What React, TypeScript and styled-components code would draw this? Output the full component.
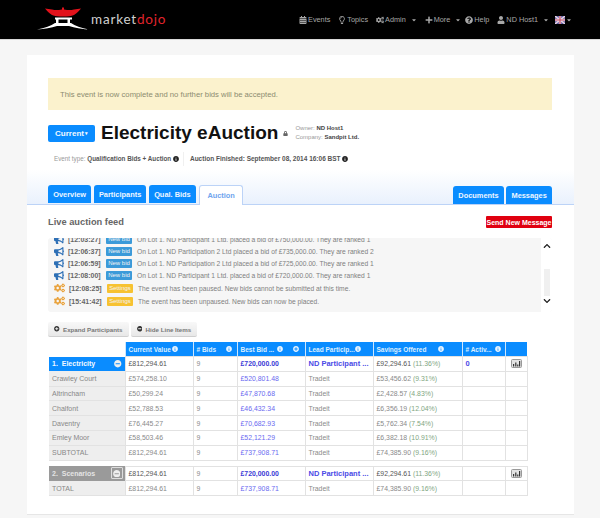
import React from "react";
import styled, { createGlobalStyle } from "styled-components";
import {
  FaBullhorn,
  FaCalendarAlt,
  FaChevronDown,
  FaChevronUp,
  FaCogs,
  FaInfoCircle,
  FaLock,
  FaMinusCircle,
  FaPlus,
  FaPlusCircle,
  FaQuestionCircle,
  FaRegLightbulb,
  FaUser,
  FaCaretDown,
} from "react-icons/fa";

const GlobalStyle = createGlobalStyle`
  html, body {
    margin: 0;
    height: 518px;
    overflow: hidden;
    background: #f6f6f6;
    font-family: "Liberation Sans", Arial, sans-serif;
  }
`;

const feed = [
  { kind: "bid", time: "[12:03:27]", text: "On Lot 1. ND Participant 1 Ltd. placed a bid of £750,000.00. They are ranked 1" },
  { kind: "bid", time: "[12:06:37]", text: "On Lot 1. ND Participation 2 Ltd placed a bid of £735,000.00. They are ranked 2" },
  { kind: "bid", time: "[12:06:59]", text: "On Lot 1. ND Participation 2 Ltd placed a bid of £725,000.00. They are ranked 1" },
  { kind: "bid", time: "[12:08:00]", text: "On Lot 1. ND Participant 1 Ltd. placed a bid of £720,000.00. They are ranked 1" },
  { kind: "settings", time: "[12:08:25]", text: "The event has been paused. New bids cannot be submitted at this time." },
  { kind: "settings", time: "[15:41:42]", text: "The event has been unpaused. New bids can now be placed." },
];

const lots = [
  ["Crawley Court", "£574,258.10", "£520,801.48", "£53,456.62", "(9.31%)"],
  ["Altrincham", "£50,299.24", "£47,870.68", "£2,428.57", "(4.83%)"],
  ["Chalfont", "£52,788.53", "£46,432.34", "£6,356.19", "(12.04%)"],
  ["Daventry", "£76,445.27", "£70,682.93", "£5,762.34", "(7.54%)"],
  ["Emley Moor", "£58,503.46", "£52,121.29", "£6,382.18", "(10.91%)"],
  ["SUBTOTAL", "£812,294.61", "£737,908.71", "£74,385.90", "(9.16%)"],
];

const columns = [76, 68, 44, 68, 68, 89, 43, 22];

const Logo = () => (
  <LogoWrap>
    <svg width="52" height="24" viewBox="0 0 52 24">
      <path d="M0 22.5 C8 21 14 19 18 16 L34 16 C38 19 44 21 52 22.5 C44 22 38 21 32 19 L20 19 C14 21 8 22 0 22.5Z" fill="#fff" />
      <path d="M18 10.5 H35 V12.5 H33 V17 H30.5 V12.5 H21.5 V17 H19 V12.5 H18Z" fill="#fff" />
      <path d="M25 0.5 H27 V2.5 C31 3 33 3.5 37 2.5 L44 1.5 C42 4 40 6 37 8 C32 10 20 10 15 8 C12 6 10 4 8 1.5 L15 2.5 C19 3.5 21 3 25 2.5Z" fill="#e2121b" />
    </svg>
    <Brand>
      market<BrandRed>dojo</BrandRed>
    </Brand>
  </LogoWrap>
);

const Flag = () => (
  <svg width="10" height="8" viewBox="0 0 10 8">
    <rect width="10" height="8" fill="#5b5ba8" />
    <path d="M0 0 L10 8 M10 0 L0 8" stroke="#e9d5e0" strokeWidth="1.4" />
    <path d="M5 0 V8 M0 4 H10" stroke="#e9d5e0" strokeWidth="2.4" />
    <path d="M5 0 V8 M0 4 H10" stroke="#c9566e" strokeWidth="1.2" />
  </svg>
);

const ChartIcon = () => (
  <svg width="11" height="9" viewBox="0 0 11 9">
    <rect x="0.5" y="0.5" width="10" height="8" rx="1" fill="#e4e4e4" stroke="#999" />
    <path d="M2 7.5 H3.2 V5 H2Z M4.2 7.5 H5.4 V3.5 H4.2Z M6.2 7.5 H7.4 V5.5 H6.2Z M8 7.5 H9.2 V2 H8Z" fill="#333" />
  </svg>
);

const App: React.FC = () => {
  return (
    <>
      <GlobalStyle />
      <Header>
        <Logo />
        <Nav>
          <NavItem $gap={8}><FaCalendarAlt />Events</NavItem>
          <NavItem $gap={8}><FaRegLightbulb />Topics</NavItem>
          <NavItem $gap={8}><FaCogs />Admin<Caret /></NavItem>
          <NavItem $gap={4}><FaPlus />More<Caret /></NavItem>
          <NavItem $gap={8}><FaQuestionCircle />Help</NavItem>
          <NavItem $gap={6}><FaUser />ND Host1<Caret /></NavItem>
          <NavItem $gap={0}><Flag /><FlagCaret /></NavItem>
        </Nav>
      </Header>
      <Card>
        <Alert>This event is now complete and no further bids will be accepted.</Alert>
        <TitleRow>
          <StatusButton>Current <small>▾</small></StatusButton>
          <Title>Electricity eAuction</Title>
          <LockIcon />
          <Owner>
            <div>Owner: <b>ND Host1</b></div>
            <div>Company: <b>Sandpit Ltd.</b></div>
          </Owner>
        </TitleRow>
        <MetaRow>
          <MetaItem>
            Event type: <b>Qualification Bids + Auction</b> <MetaInfo />
          </MetaItem>
          <MetaItem $divided>
            <b>Auction Finished: September 08, 2014 16:06 BST</b> <MetaInfo />
          </MetaItem>
        </MetaRow>
        <TabBand>
          <TabGroup>
            <Tab>Overview</Tab>
            <Tab>Participants</Tab>
            <Tab>Qual. Bids</Tab>
            <Tab $active>Auction</Tab>
          </TabGroup>
          <TabGroup>
            <Tab>Documents</Tab>
            <Tab>Messages</Tab>
          </TabGroup>
        </TabBand>
        <FeedHead>
          <FeedTitle>Live auction feed</FeedTitle>
          <SendButton>Send New Message</SendButton>
        </FeedHead>
        <FeedBox>
          <FeedList>
            {feed.map((row) => (
              <FeedRow key={row.time} $kind={row.kind}>
                {row.kind === "bid" ? <BidIcon /> : <SettingsIcon />}
                <FeedTime>{row.time}</FeedTime>
                <Badge $kind={row.kind}>{row.kind === "bid" ? "New bid" : "Settings"}</Badge>
                <FeedText>{row.text}</FeedText>
              </FeedRow>
            ))}
          </FeedList>
          <ScrollBar>
            <FaChevronUp />
            <ScrollThumb />
            <FaChevronDown />
          </ScrollBar>
        </FeedBox>
        <ButtonRow>
          <GreyButton><FaPlusCircle />Expand Participants</GreyButton>
          <GreyButton><FaMinusCircle />Hide Line Items</GreyButton>
        </ButtonRow>
        <Table>
          <colgroup>
            {columns.map((w, i) => (
              <col key={i} style={{ width: w }} />
            ))}
          </colgroup>
          <thead>
            <tr>
              <BlankHead />
              <Th><HeadInner $pad={12}><span>Current Value</span><FaInfoCircle /></HeadInner></Th>
              <Th><HeadInner $pad={2}><span># Bids</span><FaInfoCircle /></HeadInner></Th>
              <Th><HeadInner $pad={3}><span>Best Bid ...</span><BidInfo /><FaPlusCircle /></HeadInner></Th>
              <Th><HeadInner $pad={11}><span>Lead Particip...</span><FaInfoCircle /></HeadInner></Th>
              <Th><HeadInner $pad={15}><span>Savings Offered</span><FaInfoCircle /></HeadInner></Th>
              <Th><HeadInner $pad={1}><span># Activ...</span><FaInfoCircle /></HeadInner></Th>
              <Th />
            </tr>
          </thead>
          <tbody>
            <tr>
              <LotCell>
                <LotInner>1.&nbsp; Electricity<FaMinusCircle /></LotInner>
              </LotCell>
              <Td $strong>£812,294.61</Td>
              <Td>9</Td>
              <BidTd $bold>£720,000.00</BidTd>
              <LeadTd>ND Participant ...</LeadTd>
              <Td $strong>£92,294.61 <Percent>(11.36%)</Percent></Td>
              <LeadTd>0</LeadTd>
              <IconTd><ChartIcon /></IconTd>
            </tr>
            {lots.map((lot) => (
              <tr key={lot[0]}>
                <NameCell>{lot[0]}</NameCell>
                <Td>{lot[1]}</Td>
                <Td>9</Td>
                <BidTd>{lot[2]}</BidTd>
                <Td>Tradeit</Td>
                <Td>{lot[3]} <Percent>{lot[4]}</Percent></Td>
                <Td />
                <Td />
              </tr>
            ))}
            <Spacer><td colSpan={8} /></Spacer>
            <tr>
              <LotCell $muted>
                <LotInner>2.&nbsp; Scenarios<BoxedMinus><FaMinusCircle /></BoxedMinus></LotInner>
              </LotCell>
              <Td $strong>£812,294.61</Td>
              <Td>9</Td>
              <BidTd $bold>£720,000.00</BidTd>
              <LeadTd>ND Participant ...</LeadTd>
              <Td $strong>£92,294.61 <Percent>(11.36%)</Percent></Td>
              <Td />
              <IconTd><ChartIcon /></IconTd>
            </tr>
            <tr>
              <NameCell>TOTAL</NameCell>
              <Td>£812,294.61</Td>
              <Td>9</Td>
              <BidTd>£737,908.71</BidTd>
              <Td>Tradeit</Td>
              <Td>£74,385.90 <Percent>(9.16%)</Percent></Td>
              <Td />
              <Td />
            </tr>
          </tbody>
        </Table>
      </Card>
    </>
  );
};

export default App;

const Header = styled.header`
  height: 39px;
  box-sizing: content-box;
  background: #000;
  border-bottom: 1px solid #d8d8d8;
  display: flex;
  align-items: center;
  padding-left: 37px;
`;

const LogoWrap = styled.div`
  display: flex;
  align-items: center;
  gap: 2px;
  margin-top: -1px;
`;

const Brand = styled.div`
  font-family: "Lato", sans-serif;
  font-weight: 400;
  font-size: 13.5px;
  letter-spacing: 0.8px;
  color: #d0d0d0;
`;

const BrandRed = styled.span`
  color: #e0242c;
`;

const Nav = styled.nav`
  margin-left: auto;
  padding-right: 28px;
  display: flex;
  align-items: center;
`;

const NavItem = styled.div<{ $gap: number }>`
  display: flex;
  align-items: center;
  gap: 1px;
  margin-right: ${(p) => p.$gap}px;
  font-size: 7.3px;
  color: #a8a8a8;
  white-space: nowrap;
  svg {
    font-size: 8px;
    flex: none;
  }
`;

const Caret = styled(FaCaretDown)`
  && {
    font-size: 6px;
    margin-left: 4px;
  }
`;

const FlagCaret = styled(FaCaretDown)`
  && {
    font-size: 6px;
  }
`;

const Card = styled.main`
  width: 547px;
  height: 460px;
  box-sizing: border-box;
  margin: 15px 0 0 27px;
  padding: 23px 22px 0 21px;
  background: #fff;
  border-bottom: 1px solid #e6e6e6;
`;

const Alert = styled.div`
  height: 32px;
  display: flex;
  align-items: center;
  padding-left: 12px;
  background: #fbf2cd;
  color: #8c8c70;
  font-size: 7.7px;
`;

const TitleRow = styled.div`
  display: flex;
  align-items: center;
  margin-top: 12px;
  height: 22px;
`;

const StatusButton = styled.div`
  width: 47px;
  height: 17px;
  display: flex;
  align-items: center;
  justify-content: center;
  gap: 1px;
  background: #0a8cff;
  border-radius: 2px;
  color: #f2f8ff;
  font-size: 8px;
  font-weight: bold;
  small {
    font-size: 5px;
  }
`;

const Title = styled.h1`
  margin: 0 0 1px 6px;
  font-size: 19px;
  font-weight: bold;
  color: #111;
  white-space: nowrap;
`;

const LockIcon = styled(FaLock)`
  font-size: 5px;
  color: #666;
  margin-left: 5px;
`;

const Owner = styled.div`
  margin-left: 7px;
  font-size: 6px;
  line-height: 9.5px;
  color: #999;
  b {
    color: #444;
  }
`;

const MetaRow = styled.div`
  display: flex;
  margin: 8px 0 0 6px;
  height: 14px;
  align-items: center;
`;

const MetaItem = styled.div<{ $divided?: boolean }>`
  font-size: ${(p) => (p.$divided ? 6.5 : 6.3)}px;
  color: #999;
  padding-left: ${(p) => (p.$divided ? 6 : 0)}px;
  margin-left: ${(p) => (p.$divided ? 4 : 0)}px;
  border-left: ${(p) => (p.$divided ? "1px solid #f0f0f0" : "0")};
  line-height: 14px;
  white-space: nowrap;
  b {
    color: #555;
  }
`;

const MetaInfo = styled(FaInfoCircle)`
  font-size: 6px;
  color: #222;
  vertical-align: -0.5px;
`;

const TabBand = styled.div`
  display: flex;
  justify-content: space-between;
  align-items: flex-end;
  height: 34px;
  margin: 4px -22px 0 -21px;
  padding: 0 22px 0 21px;
  background: linear-gradient(#fff, #e9f1fd);
  border-bottom: 1px solid #bcd3f7;
`;

const TabGroup = styled.div`
  display: flex;
  gap: 2.5px;
`;

const Tab = styled.div<{ $active?: boolean }>`
  height: ${(p) => (p.$active ? 20 : 18)}px;
  box-sizing: border-box;
  display: flex;
  align-items: center;
  padding: 0 ${(p) => (p.$active ? 7 : 5.2)}px;
  margin-left: ${(p) => (p.$active ? 1 : 0)}px;
  margin-bottom: ${(p) => (p.$active ? -1 : 0)}px;
  border-radius: 3px 3px 0 0;
  background: ${(p) => (p.$active ? "#fff" : "#0a8cff")};
  border: ${(p) => (p.$active ? "1px solid #bcd3f7" : "0")};
  border-bottom: 0;
  color: ${(p) => (p.$active ? "#6fa5ee" : "#eef6ff")};
  font-size: 7.4px;
  font-weight: bold;
`;

const FeedHead = styled.div`
  display: flex;
  justify-content: space-between;
  align-items: center;
  margin-top: 10px;
  height: 14px;
`;

const FeedTitle = styled.div`
  font-size: 9.3px;
  font-weight: bold;
  color: #666;
`;

const SendButton = styled.div`
  width: 66px;
  height: 12px;
  display: flex;
  align-items: center;
  justify-content: center;
  background: #e00010;
  border-radius: 1px;
  color: #fff;
  font-size: 7px;
  font-weight: bold;
  white-space: nowrap;
`;

const FeedBox = styled.div`
  display: flex;
  height: 74px;
  margin-top: 9px;
  background: #f6f6f6;
  border-radius: 3px;
  overflow: hidden;
`;

const FeedList = styled.div`
  flex: 1;
  min-width: 0;
  display: flex;
  flex-direction: column;
  justify-content: flex-end;
  padding: 0 0 4.5px 6px;
`;

const FeedRow = styled.div<{ $kind: string }>`
  display: flex;
  flex: none;
  align-items: center;
  height: ${(p) => (p.$kind === "bid" ? 12 : 13)}px;
  font-size: 6.7px;
  color: #808080;
  white-space: nowrap;
`;

const BidIcon = styled(FaBullhorn)`
  flex: none;
  width: 10px;
  font-size: 9px;
  color: #2d6fb5;
`;

const SettingsIcon = styled(FaCogs)`
  flex: none;
  width: 11px;
  font-size: 10px;
  color: #e9a23b;
`;

const FeedTime = styled.span`
  margin-left: 4px;
  width: 37px;
  font-size: 7px;
  font-weight: bold;
  color: #666;
`;

const Badge = styled.span<{ $kind: string }>`
  width: 26px;
  height: 9px;
  margin-left: 1px;
  line-height: 9px;
  text-align: center;
  border-radius: 1px;
  font-size: 6px;
  color: #f3f3f3;
  background: ${(p) => (p.$kind === "bid" ? "#3b9ad9" : "#f7c231")};
`;

const FeedText = styled.span`
  margin-left: 5px;
`;

const ScrollBar = styled.div`
  flex: none;
  width: 11px;
  background: #fff;
  display: flex;
  flex-direction: column;
  align-items: center;
  padding-top: 4px;
  box-sizing: border-box;
  svg {
    flex: none;
    font-size: 8px;
    color: #222;
  }
`;

const ScrollThumb = styled.div`
  width: 6px;
  height: 27px;
  margin: 19px 0 1px;
  background: #f0f0f0;
`;

const ButtonRow = styled.div`
  display: flex;
  gap: 2px;
  margin-top: 10px;
`;

const GreyButton = styled.div`
  height: 15px;
  padding: 0 6px;
  display: flex;
  align-items: center;
  gap: 3.5px;
  background: linear-gradient(#f8f8f8, #e8e8e8);
  border-bottom: 1px solid #cfcfcf;
  border-radius: 2px;
  box-sizing: border-box;
  font-size: 6.2px;
  font-weight: bold;
  color: #777;
  white-space: nowrap;
  svg {
    font-size: 5.5px;
    color: #333;
  }
`;

const Table = styled.table`
  width: 478px;
  margin: 5px 0 0 1px;
  table-layout: fixed;
  border-collapse: collapse;
  font-size: 6.9px;
  color: #8a8a8a;
`;

const BlankHead = styled.th`
  background: #fff;
`;

const Th = styled.th`
  height: 14px;
  padding: 0 3px;
  background: #0a8cff;
  color: #dcefff;
  font-size: 6.5px;
  text-align: left;
  border-left: 1px solid #cfe6fb;
`;

const HeadInner = styled.div<{ $pad: number }>`
  display: flex;
  align-items: center;
  justify-content: space-between;
  white-space: nowrap;
  padding-right: ${(p) => p.$pad}px;
  svg {
    flex: none;
    font-size: 6px;
    color: #e8f4ff;
  }
`;

const BidInfo = styled(FaInfoCircle)`
  margin: 0 auto 0 3px;
`;

const Td = styled.td<{ $strong?: boolean }>`
  height: 14.8px;
  padding: 0 3px;
  box-sizing: border-box;
  border: 1px solid #e2e2e2;
  white-space: nowrap;
  color: ${(p) => (p.$strong ? "#555" : "#8a8a8a")};
`;

const BidTd = styled(Td)<{ $bold?: boolean }>`
  color: ${(p) => (p.$bold ? "#3b3bd6" : "#6a6af0")};
  font-weight: ${(p) => (p.$bold ? "bold" : "normal")};
`;

const LeadTd = styled(Td)`
  color: #4a4ae6;
  font-size: 7.5px;
  font-weight: bold;
`;

const IconTd = styled(Td)`
  text-align: center;
  line-height: 0;
`;

const NameCell = styled.td`
  height: 14.8px;
  padding: 0 3px;
  box-sizing: border-box;
  background: #eee;
  border-bottom: 1px solid #e2e2e2;
  color: #888;
  font-size: 7px;
`;

const LotCell = styled.td<{ $muted?: boolean }>`
  height: 14.8px;
  padding: 0 3px;
  box-sizing: border-box;
  background: ${(p) => (p.$muted ? "#9a9a9a" : "#0a8cff")};
  color: ${(p) => (p.$muted ? "#e4e4e4" : "#f2f8ff")};
  font-size: 7px;
  font-weight: bold;
`;

const LotInner = styled.div`
  display: flex;
  align-items: center;
  justify-content: space-between;
  white-space: nowrap;
  svg {
    font-size: 7.5px;
    color: #eee;
  }
`;

const BoxedMinus = styled.span`
  display: flex;
  align-items: center;
  justify-content: center;
  width: 10px;
  height: 10px;
  margin-right: -1px;
  border: 1px solid #ddd;
  border-radius: 1px;
`;

const Percent = styled.span`
  color: #7fa67f;
`;

const Spacer = styled.tr`
  height: 6px;
  td {
    padding: 0;
    border: 0;
  }
`;
